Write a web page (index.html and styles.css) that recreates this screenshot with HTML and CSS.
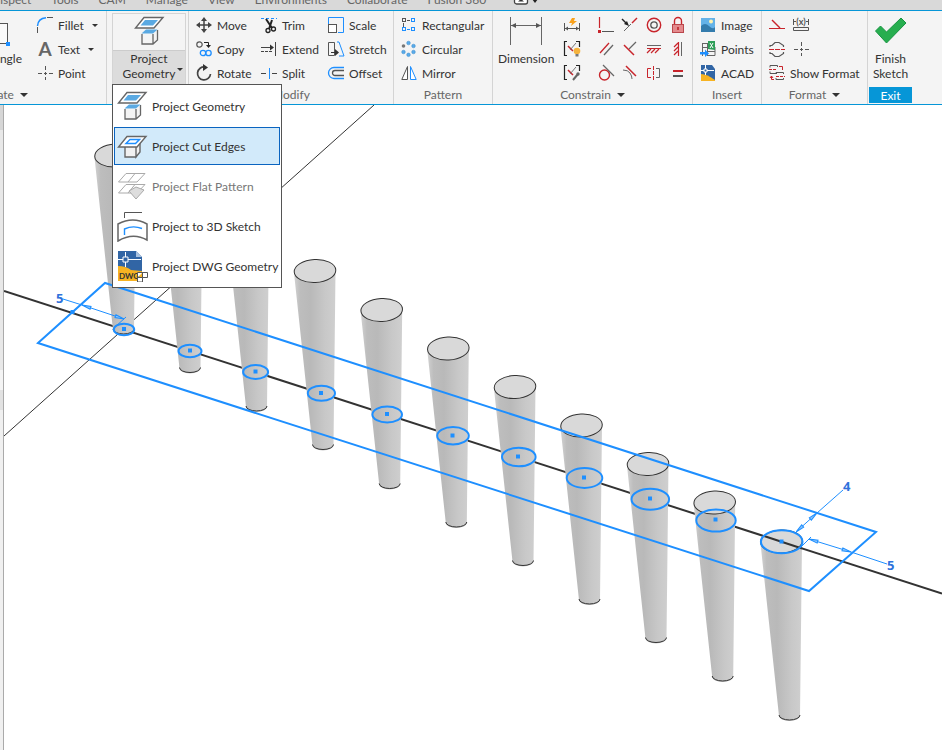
FILE: index.html
```html
<!DOCTYPE html>
<html lang="en">
<head>
  <meta charset="UTF-8" />
  <meta name="viewport" content="width=device-width, initial-scale=1.0">
  <title>Sketch - Project Cut Edges</title>
  <link rel="stylesheet" href="styles.css">
</head>
<body>
  <!-- Shared icons -->
  <svg class="defs" aria-hidden="true">
    <symbol id="i-project" viewBox="0 0 32 32">
      <path d="M11 2.500H30L21 13H2.500Z" fill="#fff" stroke="#666" stroke-width="1.400"/>
      <path d="M12 5H25L20 10.500H7.500Z" fill="#5aa9e2"/>
      <path d="M9 18.500V29H20L24.500 25V15L20 18.500Z" fill="#f4f4f4"/>
      <path d="M9 19V29H20L24.500 25V15M20 19V29" fill="none" stroke="#666" stroke-width="1.300"/>
      <path d="M8.500 18.500L13 14.500H24.500L20 18.500Z" fill="#5aa9e2"/>
    </symbol>
    <symbol id="i-point" viewBox="0 0 16 16">
      <path d="M1 8.500H5M7 8.500H10M12 8.500H16M8.500 1V5M8.500 7V10M8.500 12V15" stroke="#555" fill="none"/>
    </symbol>
  </svg>

  <!-- Tabs -->
  <nav class="tabs">
    <a href="#">Inspect</a>
    <a href="#">Tools</a>
    <a href="#">CAM</a>
    <a href="#">Manage</a>
    <a href="#">View</a>
    <a href="#">Environments</a>
    <a href="#">Collaborate</a>
    <a href="#">Fusion 360</a>
    <button class="tab-toggle" aria-label="Minimize ribbon">
      <svg width="26" height="10" viewBox="0 0 26 10"><rect x="1.500" y="-6" width="13" height="10" rx="2" fill="#fff" stroke="#444" stroke-width="1.300"/><path d="M5 1.500L8 -1L11 1.500Z" fill="#333"/><path d="M19 -1H25L22 3Z" fill="#222"/></svg>
    </button>
  </nav>

  <!-- Ribbon -->
  <header class="ribbon">
    <section class="panel create">
      <div class="panel-body">
        <button class="big rectangle">
          <svg width="32" height="32" viewBox="0 0 32 32"><rect x="1.500" y="8.500" width="27" height="20" fill="#fafafa" stroke="#555"/><rect x="27" y="27" width="4" height="4" fill="#1e8fff"/></svg>
          <span>Rectangle</span>
        </button>
        <div class="rows">
          <button class="tool"><svg class="icon" viewBox="0 0 16 16"><path d="M.500 9Q1 1.500 9 .800" fill="none" stroke="#1e8fff" stroke-width="1.500"/><path d="M10 .500H16M.500 10V16" stroke="#555"/></svg>Fillet<i class="caret small"></i></button>
          <button class="tool"><svg class="icon" viewBox="0 0 16 16"><text x="8" y="15" class="glyph">A</text></svg>Text<i class="caret small"></i></button>
          <button class="tool"><svg class="icon"><use href="#i-point"/></svg>Point</button>
        </div>
      </div>
      <button class="panel-title">Create<i class="caret"></i></button>
    </section>

    <section class="project">
      <button class="project-button" aria-expanded="true">
        <span class="project-icon"><svg width="32" height="32"><use href="#i-project"/></svg></span>
        <span class="project-label">Project<br>Geometry<i class="caret small"></i></span>
      </button>
      <div class="menu" role="menu">
        <button class="menu-item" role="menuitem"><svg width="32" height="32"><use href="#i-project"/></svg>Project Geometry</button>
        <button class="menu-item selected" role="menuitem">
          <svg width="32" height="32" viewBox="0 0 32 32"><path d="M9 16H20V27H9ZM20 16L24 13V22L20 27Z" fill="#f1f1f1" stroke="#666" stroke-width="1.400"/><path d="M11 6.500H30L21 17H2.500Z" fill="#fff" stroke="#666" stroke-width="1.400"/><path d="M14 9.500H23.500L19.500 13.500H10Z" fill="#fff" stroke="#1e8fff" stroke-width="1.500"/></svg>
          Project Cut Edges
        </button>
        <button class="menu-item" role="menuitem" disabled>
          <svg width="32" height="32" viewBox="0 0 32 32"><path d="M10 3.500H29L21 12H2.500ZM19 3.500L12 12M10 14.500H29L21 23H2.500ZM19 14.500L12 23" fill="none" stroke="#aaa"/><path d="M13 21L20 17L28 20L20 29Z" fill="#ddd" stroke="#aaa"/></svg>
          Project Flat Pattern
        </button>
        <button class="menu-item" role="menuitem">
          <svg width="32" height="32" viewBox="0 0 32 32"><path d="M8.500 8V2.500H26" fill="none" stroke="#555"/><path d="M2 14Q17 6 31 14V30Q17 22 2 31Z" fill="#fff" stroke="#666" stroke-width="1.500"/><path d="M8.500 25V19Q17 15 26 18.500" fill="none" stroke="#1e8fff" stroke-width="1.400"/></svg>
          Project to 3D Sketch
        </button>
        <button class="menu-item" role="menuitem">
          <svg width="32" height="32" viewBox="0 0 32 32"><path d="M2 1H20L26 7V22H2Z" fill="#3165a5"/><path d="M20 1V7H26Z" fill="#a9c2df"/><path d="M2 16Q10 16 15 20L26 21V31H2Z" fill="#f7b322"/><path d="M2 9.500H7M12 9.500H25M9.500 2V7M9.500 12V17M7 7H12V12H7Z" stroke="#fff" fill="none"/><text x="3" y="29" class="dwg">DWG</text><path d="M21.500 22.500H31.500V27.500H26.500V32H21.500ZM21.500 27.500H26.500V22.500" fill="#fff" stroke="#555"/></svg>
          Project DWG Geometry
        </button>
      </div>
    </section>

    <section class="panel modify">
      <div class="panel-body">
        <button class="tool"><svg class="icon" viewBox="0 0 16 16"><path d="M8 2V14M2 8H14" stroke="#444" stroke-width="1.500"/><path d="M8 0L11 4H5ZM8 16L5 12H11ZM0 8L4 5V11ZM16 8L12 11V5Z" fill="#444"/></svg>Move</button>
        <button class="tool"><svg class="icon" viewBox="0 0 16 16"><path d="M0 1.500H16" stroke="#1e8fff" stroke-dasharray="3 2"/><path d="M5 2L11 11M11 3L8 12" stroke="#222" stroke-width="2"/><circle cx="7" cy="13.500" r="2" fill="none" stroke="#222" stroke-width="1.300"/><circle cx="12.500" cy="12" r="2" fill="none" stroke="#222" stroke-width="1.300"/></svg>Trim</button>
        <button class="tool"><svg class="icon" viewBox="0 0 16 16"><path d="M.500 8V.500H15.500V15.500H10" fill="none" stroke="#1e8fff"/><rect x=".500" y="7.500" width="8" height="8" fill="#fff" stroke="#555"/></svg>Scale</button>
        <button class="tool"><svg class="icon" viewBox="0 0 16 16"><circle cx="3.500" cy="3.500" r="2.700" fill="none" stroke="#555" stroke-width="1.200"/><path d="M8 1.500H12.500V5" fill="none" stroke="#222"/><path d="M10 4H15L12.500 7Z" fill="#222"/><g fill="none" stroke="#1e8fff" stroke-width="1.300"><circle cx="7" cy="12" r="2.700"/><circle cx="12.500" cy="12" r="2.700"/></g></svg>Copy</button>
        <button class="tool"><svg class="icon" viewBox="0 0 16 16"><path d="M0 6.500H10M14.500 1V15" stroke="#444"/><path d="M0 10.500H12" stroke="#444" stroke-dasharray="3 1"/><path d="M9 3.500L13 6.500L9 9.500Z" fill="#333"/></svg>Extend</button>
        <button class="tool"><svg class="icon" viewBox="0 0 16 16"><path d="M.500 1.500H6.500V14.500H.500Z" fill="none" stroke="#555"/><path d="M9 1H11L16 15H11" fill="none" stroke="#1e8fff"/><path d="M3 11.500H8" stroke="#333"/><path d="M7 8L11 11.500L7 15Z" fill="#333"/></svg>Stretch</button>
        <button class="tool"><svg class="icon" viewBox="0 0 16 16"><path d="M9 2A6.500 6.500 0 1 0 14.500 9" fill="none" stroke="#444" stroke-width="1.700"/><path d="M7 -1L12 2.500L7 6Z" fill="#333"/></svg>Rotate</button>
        <button class="tool"><svg class="icon" viewBox="0 0 16 16"><path d="M0 8.500H5M11 8.500H16" stroke="#444"/><path d="M8.500 3V14" stroke="#1e8fff"/></svg>Split</button>
        <button class="tool"><svg class="icon" viewBox="0 0 16 16"><path d="M16 2.500H6A5.500 5.500 0 0 0 6 13.500H16" fill="none" stroke="#1e8fff" stroke-width="1.300"/><path d="M16 5.500H7A2.500 2.500 0 0 0 7 10.500H16" fill="none" stroke="#555" stroke-width="1.300"/></svg>Offset</button>
      </div>
      <div class="panel-title">Modify</div>
    </section>

    <section class="panel pattern">
      <div class="panel-body">
        <button class="tool"><svg class="icon" viewBox="0 0 16 16"><g fill="none" stroke="#555"><rect x="1.500" y="1.500" width="3" height="3"/><path d="M6 3.500H9M2.500 6V10"/></g><g fill="none" stroke="#1e8fff"><rect x="10.500" y="1.500" width="3" height="3"/><rect x="1.500" y="10.500" width="3" height="3"/><rect x="10.500" y="10.500" width="3" height="3"/><path d="M6 12.500H9"/></g></svg>Rectangular</button>
        <button class="tool"><svg class="icon" viewBox="0 0 16 16"><g fill="#5aabea" stroke="#3286c8" stroke-width=".500"><circle cx="7.500" cy="2" r="1.800"/><circle cx="12.500" cy="5" r="1.800"/><circle cx="12.500" cy="11" r="1.800"/><circle cx="7.500" cy="13.800" r="1.800"/><circle cx="2.500" cy="11" r="1.800"/></g><circle cx="2.500" cy="5" r="1.800" fill="#777"/></svg>Circular</button>
        <button class="tool"><svg class="icon" viewBox="0 0 16 16"><path d="M6.500 1.500V14.500H.800Z" fill="#fff" stroke="#555"/><path d="M9.500 1.500V14.500H15.200Z" fill="#fff" stroke="#1e8fff"/></svg>Mirror</button>
      </div>
      <div class="panel-title">Pattern</div>
    </section>

    <section class="panel constrain">
      <div class="panel-body">
        <button class="big dimension-button">
          <svg width="34" height="32" viewBox="0 0 34 32"><path d="M1.500 2V30M32.500 2V30" stroke="#666"/><path d="M2 10.500H32" stroke="#666"/><path d="M2 10.500L7 8V13ZM32 10.500L27 8V13Z" fill="#555"/></svg>
          <span>Dimension</span>
        </button>
        <div class="constraints">
          <button aria-label="Automatic dimensions"><svg class="icon" viewBox="0 0 16 16"><path d="M.500 6V14M15.500 6V14M1 11.500H15" stroke="#555"/><path d="M1 11.500L4 9.500V13.500ZM15 11.500L12 9.500V13.500Z" fill="#555"/><path d="M8 1L5 6H8L7 9L13 4H10L11 1Z" fill="#f9a11b"/></svg></button>
          <button aria-label="Coincident"><svg class="icon" viewBox="0 0 16 16"><path d="M1.500 0V11" stroke="#c8242b" stroke-width="1.200"/><path d="M4 14.500H16" stroke="#555"/><rect y="13" width="3" height="3" fill="#c8242b"/></svg></button>
          <button aria-label="Collinear"><svg class="icon" viewBox="0 0 16 16"><path d="M2 14L9 7" stroke="#666"/><path d="M10 6L15 1" stroke="#c8242b" stroke-width="1.500"/><path d="M0 2L4 6" stroke="#222" stroke-width="1.500"/><path d="M7 9L2 7L5 4Z" fill="#222"/></svg></button>
          <button aria-label="Concentric"><svg class="icon" viewBox="0 0 16 16"><circle cx="8" cy="8" r="6.700" fill="none" stroke="#c8242b" stroke-width="1.400"/><circle cx="8" cy="8" r="3.200" fill="none" stroke="#555" stroke-width="1.300"/></svg></button>
          <button aria-label="Fix"><svg class="icon" viewBox="0 0 16 16"><path d="M4.500 7V4A3.500 3.500 0 0 1 11.500 4V7" fill="none" stroke="#c8242b" stroke-width="1.400"/><rect x="2.500" y="7.500" width="11" height="8" fill="#e48a8d" stroke="#b9474c"/><path d="M8 10V13" stroke="#b91f26" stroke-width="1.500"/></svg></button>

          <button aria-label="Show constraints"><svg class="icon" viewBox="0 0 16 16"><path d="M3 .500H.500V14.500H3M12 .500H15.500V6" fill="none" stroke="#222" stroke-width="1.200"/><path d="M4 5L9 10" stroke="#c8242b" stroke-width="1.500"/><path d="M6 9L12 2" stroke="#777"/><circle cx="13" cy="10" r="3.300" fill="#f5b33e"/><path d="M11.500 13H14.500V15.500H11.500Z" fill="#777"/></svg></button>
          <button aria-label="Parallel"><svg class="icon" viewBox="0 0 16 16"><path d="M2 12L11 2" stroke="#c8242b" stroke-width="1.300"/><path d="M6 14L15 4" stroke="#666" stroke-width="1.300"/></svg></button>
          <button aria-label="Perpendicular"><svg class="icon" viewBox="0 0 16 16"><path d="M7 8L14 1" stroke="#666" stroke-width="1.300"/><path d="M2 4L12 14" stroke="#c8242b" stroke-width="1.500"/></svg></button>
          <button aria-label="Horizontal"><svg class="icon" viewBox="0 0 16 16"><path d="M1 4.500H15" stroke="#666"/><path d="M1 7.500H15M5 8L1 12M9 8L5 12M13 8L9 12" stroke="#c8242b" stroke-width="1.200" fill="none"/></svg></button>
          <button aria-label="Vertical"><svg class="icon" viewBox="0 0 16 16"><path d="M11.500 1V15" stroke="#666"/><path d="M8.500 1V15M8 2L4 6M8 6L4 10M8 10L4 14" stroke="#c8242b" stroke-width="1.200"/></svg></button>

          <button aria-label="Constraint settings"><svg class="icon" viewBox="0 0 16 16"><path d="M3 .500H.500V14.500H3M12 .500H15.500V6" fill="none" stroke="#222" stroke-width="1.200"/><path d="M4 5L9 10" stroke="#c8242b" stroke-width="1.500"/><path d="M6 9L12 2" stroke="#777"/><path d="M9 15L14 9" stroke="#666" stroke-width="2"/><circle cx="14" cy="9" r="1.700" fill="#666"/></svg></button>
          <button aria-label="Tangent"><svg class="icon" viewBox="0 0 16 16"><circle cx="6.500" cy="10" r="5" fill="none" stroke="#c8242b" stroke-width="1.400"/><path d="M5 0L16 11" stroke="#666" stroke-width="1.300"/></svg></button>
          <button aria-label="Smooth"><svg class="icon" viewBox="0 0 16 16"><path d="M1 5Q6 5 8 8T10 14" fill="none" stroke="#666"/><path d="M4 1L14 11" stroke="#c8242b" stroke-width="1.500"/></svg></button>
          <button aria-label="Symmetric"><svg class="icon" viewBox="0 0 16 16"><path d="M5 3.500H1.500V12.500H5" fill="none" stroke="#c8242b"/><path d="M7.500 1V15" stroke="#c8242b" stroke-dasharray="4 1"/><path d="M10 3.500H13.500V12.500H10" fill="none" stroke="#666"/></svg></button>
          <button aria-label="Equal"><svg class="icon" viewBox="0 0 16 16"><path d="M3 6H13" stroke="#c8242b" stroke-width="2"/><path d="M3 11H13" stroke="#555" stroke-width="2"/></svg></button>
        </div>
      </div>
      <button class="panel-title">Constrain<i class="caret"></i></button>
    </section>

    <section class="panel insert">
      <div class="panel-body">
        <button class="tool"><svg class="icon" viewBox="0 0 16 16"><rect x="1" y="1" width="14" height="14" fill="#64b2e8"/><path d="M1 9Q5 5 9 9T15 10V15H1Z" fill="#347cad"/><circle cx="11" cy="4.500" r="2" fill="#fff2b0"/></svg>Image</button>
        <button class="tool"><svg class="icon" viewBox="0 0 16 16"><path d="M2.500 2V15M2 2.500H8M2 6.500H15M7.500 2V15M8 10.500H15M8 14.500H15V6" stroke="#666" fill="none"/><path d="M8 0H15V9L8 8Z" fill="#2e9e58"/><path d="M10 2L13 7M13 2L10 7" stroke="#fff"/><path d="M0 11H5V8.500L9 12.500L5 16V13.500H0Z" fill="#1e8fff"/></svg>Points</button>
        <button class="tool"><svg class="icon" viewBox="0 0 16 16"><path d="M1 0H12L15 4V15H1Z" fill="#3165a5"/><path d="M1 9Q7 9 15 15V16H1Z" fill="#f7b322"/><path d="M5.500 0V4M5.500 7V10M0 5.500H4M7 5.500H14M4 4H7V7H4Z" stroke="#fff" fill="none"/></svg>ACAD</button>
      </div>
      <div class="panel-title">Insert</div>
    </section>

    <section class="panel format">
      <div class="panel-body">
        <div class="pair">
          <button aria-label="Construction"><svg class="icon" viewBox="0 0 16 16"><path d="M0 11.500H16" stroke="#c8242b"/><path d="M3 3L11 11" stroke="#c8242b" stroke-width="1.400"/></svg></button>
          <button aria-label="Driven dimension"><svg class="icon" viewBox="0 0 16 16"><path d="M.500 2V8M15.500 2V8M1 4.500H3M13 4.500H15M.500 10.500H15.500V13.500H.500Z" fill="none" stroke="#555"/><text x="8" y="8" class="driven">(x)</text></svg></button>
        </div>
        <div class="pair">
          <button aria-label="Centerline"><svg class="icon" viewBox="0 0 16 16"><path d="M1 6V4.500H3L6 1.500H10L14.500 4.500V6M1 11V12.500H3L6 15.500H10L14.500 12.500V11" fill="none" stroke="#555" stroke-width="1.200"/><path d="M0 8.500H16" stroke="#c8242b" stroke-dasharray="5 1"/></svg></button>
          <button aria-label="Center point"><svg class="icon"><use href="#i-point"/></svg></button>
        </div>
        <button class="tool"><svg class="icon" viewBox="0 0 16 16"><g fill="none" stroke="#555"><path d="M1 2.500V.500H8.500V2M1 6.500V8.500H8M7 9V7.500H14.500V9M7 13V14.500H14.500V13"/></g><g fill="none" stroke="#c8242b"><path d="M0 4.500H8" stroke-dasharray="3 1"/><path d="M7 11.500H16" stroke-dasharray="3 1"/><path d="M10 1.500H13.500V5M5 14.500H2.500V11M1 13L2.500 11L4 13"/></g></svg>Show Format</button>
      </div>
      <button class="panel-title">Format<i class="caret"></i></button>
    </section>

    <section class="panel exit">
      <div class="panel-body">
        <button class="big">
          <svg width="34" height="32" viewBox="0 0 34 32"><path d="M1.500 16L6.500 11L12.500 17L27 3L32 8L12.500 28Z" fill="#27ae4f" stroke="#189441"/></svg>
          <span>Finish<br>Sketch</span>
        </button>
      </div>
      <div class="panel-title">Exit</div>
    </section>
  </header>

  <!-- Model view -->
  <main class="workspace">
    <aside class="browser-edge"><span></span><span></span><span></span><span></span><span></span></aside>
    <svg class="scene" viewBox="4 105 938 645" preserveAspectRatio="xMinYMin slice" role="img" aria-label="Model with eleven tapered pins cut by a sketch plane">
      <defs>
        <linearGradient id="pinShade">
          <stop offset="0" stop-color="#d2d2d2"/>
          <stop offset=".150" stop-color="#bdbdbd"/>
          <stop offset=".400" stop-color="#b9b9b9"/>
          <stop offset=".750" stop-color="#c8c8c8"/>
          <stop offset="1" stop-color="#cfcfcf"/>
        </linearGradient>
        <g id="pin">
          <path d="M-21 2L-2.500 174.500A10.500 5 0 0 0 18.500 174.500L20.500 0Z" fill="url(#pinShade)"/>
          <path d="M-2.500 173.500A10.500 5 0 0 0 18.500 173.500" fill="none" stroke="#333"/>
          <ellipse rx="20.800" ry="11.500" transform="rotate(-3)" fill="#d9d9d9" stroke="#333"/>
        </g>
        <marker id="arrow" viewBox="0 0 10 6" refX="10" refY="3" markerWidth="10" markerHeight="6" markerUnits="userSpaceOnUse" orient="auto-start-reverse">
          <path d="M10 3L1 1.500V4.500Z" class="arrow"/>
        </marker>
      </defs>

      <path class="thin" d="M4 436L374 105"/>
      <path class="axis" d="M4 291L942 593.500"/>

      <use href="#pin" x="115.500" y="155.500"/>
      <use href="#pin" x="182" y="194"/>
      <use href="#pin" x="248.500" y="232.500"/>
      <use href="#pin" x="315" y="271"/>
      <use href="#pin" x="381.700" y="310"/>
      <use href="#pin" x="448.300" y="348.500"/>
      <use href="#pin" x="515" y="387"/>
      <use href="#pin" x="581.500" y="425.500"/>
      <use href="#pin" x="648" y="464"/>
      <use href="#pin" x="714.700" y="502.500"/>
      <use href="#pin" x="781.500" y="541.500"/>
      <path class="axis" d="M764 536L802 548.500"/>

      <!-- Cut edges -->
      <g class="sketch">
        <path d="M38 343L105 283L876 532L809 591Z"/>
        <ellipse cx="124" cy="329.500" rx="10.200" ry="5.700"/>
        <ellipse cx="190" cy="351" rx="11.500" ry="6.300"/>
        <ellipse cx="255.600" cy="372" rx="12.500" ry="6.900"/>
        <ellipse cx="321.400" cy="393.300" rx="13.600" ry="7.500"/>
        <ellipse cx="387.200" cy="414.500" rx="14.800" ry="8.100"/>
        <ellipse cx="453" cy="435.700" rx="15.800" ry="8.700"/>
        <ellipse cx="518.800" cy="457" rx="16.800" ry="9.300"/>
        <ellipse cx="584.500" cy="478" rx="17.800" ry="9.900"/>
        <ellipse cx="650.300" cy="499.300" rx="18.800" ry="10.500"/>
        <ellipse cx="716" cy="520.500" rx="19.700" ry="11"/>
        <ellipse cx="781.700" cy="541.700" rx="20.800" ry="11.500"/>
      </g>
      <path class="centers" d="M122 329h4M188 350.500h4M253.500 371.500h4M319 393h4M385 414h4M450.500 435.500h4M516 456.500h4M582 477.500h4M648 498.500h4M713.500 519.500h4M779.500 541.500h4M70.500 312h4"/>

      <!-- Dimensions -->
      <g class="dimension">
        <path d="M63 299L82 305M115 327L126 317"/>
        <path d="M82 305L124 319" marker-start="url(#arrow)" marker-end="url(#arrow)"/>
        <path d="M843 490L817 513"/>
        <path d="M817 513L796 532" marker-start="url(#arrow)" marker-end="url(#arrow)"/>
        <path d="M801 547L811 537M851 552L887 564"/>
        <path d="M809 539L851 552" marker-start="url(#arrow)" marker-end="url(#arrow)"/>
        <text x="56" y="303">5</text>
        <text x="843" y="491">4</text>
        <text x="887" y="570">5</text>
      </g>
    </svg>
  </main>
</body>
</html>
```

FILE: styles.css
```css
* {
  box-sizing: border-box;
}
body {
  margin: 0;
  min-height: 100vh;
  display: flex;
  flex-direction: column;
  overflow: hidden;
  background: #fff;
  color: #333;
  font-family: Lato, "Open Sans", sans-serif;
  font-size: 12px;
  line-height: 15px;
}
button {
  margin: 0;
  padding: 0;
  border: 0;
  background: none;
  color: inherit;
  font: inherit;
}
svg {
  display: block;
  flex: none;
}
.defs {
  display: none;
}

/* Tabs */
.tabs {
  display: flex;
  align-items: flex-end;
  gap: 20px;
  height: 10px;
  margin-left: -7px;
  padding-bottom: 3px;
  background: #d9d9d9;
  overflow: hidden;
}
.tabs a {
  color: #666;
  text-decoration: none;
  white-space: nowrap;
}
.tab-toggle {
  margin: 0 0 -3px 7px;
}

/* Ribbon */
.ribbon {
  display: flex;
  height: 95px;
  border-top: 1px solid #0696d7;
  border-bottom: 1px solid #0696d7;
  background: #f4f4f4;
}
.panel {
  display: flex;
  flex-direction: column;
  flex: none;
  border-right: 1px solid #d4d4d4;
}
.panel-body {
  display: grid;
  grid-auto-rows: 24px;
  height: 74px;
  padding: 2px 7px 0;
}
.panel-title {
  display: flex;
  align-items: center;
  justify-content: center;
  gap: 6px;
  height: 19px;
  color: #666;
}
.tool {
  display: flex;
  align-items: center;
  gap: 5px;
  height: 24px;
  white-space: nowrap;
}
.icon {
  width: 16px;
  height: 16px;
  overflow: visible;
}
.glyph {
  font-size: 19px;
  font-weight: bold;
  fill: #666;
  text-anchor: middle;
}
.dwg {
  font-size: 8px;
  font-weight: bold;
  fill: #333;
}
.driven {
  font-size: 9px;
  font-weight: bold;
  fill: #555;
  text-anchor: middle;
}
.big {
  display: flex;
  flex-direction: column;
  align-items: center;
  gap: 4px;
  padding-top: 2px;
  height: 72px;
}
.caret {
  border: 4px solid transparent;
  border-top-color: #333;
  border-bottom: 0;
}
.caret.small {
  margin-left: 3px;
  border-width: 3px 3px 0;
}

.create {
  margin-left: -40px;
  border-right: 0;
}
.create .panel-body {
  display: flex;
  justify-content: flex-end;
  gap: 15px;
  width: 146px;
}
.rows {
  width: 62px;
}
.create .panel-title {
  align-self: flex-start;
  margin-left: 19px;
}
.rectangle {
  align-items: flex-end;
}
.rectangle svg {
  margin-right: 11px;
}

/* Project button and its menu */
.project {
  position: relative;
  flex: none;
  padding: 2px 2px 0 5px;
  border-left: 1px solid #d4d4d4;
  border-right: 1px solid #d4d4d4;
}
.project-button {
  display: block;
  width: 74px;
  border: 1px solid #d4d4d4;
}
.project-icon {
  display: flex;
  justify-content: center;
  height: 36px;
  padding-top: 1px;
}
.project-label {
  display: block;
  position: relative;
  height: 35px;
  border-top: 1px solid #ccc;
  background: #dcdcdc;
}
.project-label .caret {
  position: absolute;
  right: 2px;
  bottom: 14px;
}
.menu {
  position: absolute;
  z-index: 1;
  top: 73px;
  left: 5px;
  display: flex;
  flex-direction: column;
  gap: 2px;
  min-width: 170px;
  padding: 2px 1px;
  border: 1px solid #555;
  background: #fff;
}
.menu-item {
  display: flex;
  align-items: center;
  gap: 4px;
  height: 38px;
  padding: 0 1px;
  border: 1px solid transparent;
  white-space: nowrap;
}
.menu-item.selected {
  border-color: #0a64c0;
  background: #d2eafa;
}
.menu-item:disabled {
  color: #777;
}

.modify .panel-body {
  grid-template-columns: 65px 67px 65px;
  padding-right: 0;
}
.pattern .panel-body {
  width: 98px;
}
.constrain .panel-body {
  display: flex;
  gap: 10px;
  width: 199px;
  padding-left: 5px;
}
.dimension-button {
  width: 57px;
}
.constraints {
  display: grid;
  grid-template-columns: 34px repeat(4, 24px);
  grid-auto-rows: 24px;
}
.constraints button,
.pair button {
  display: flex;
  align-items: center;
}
.insert .panel-body {
  width: 68px;
}
.pair {
  display: flex;
  gap: 8px;
}
.format .panel-body {
  width: 105px;
}
.exit .panel-body {
  padding: 2px 4px 0;
}
.exit .big {
  width: 37px;
}
.exit .panel-title {
  height: 16px;
  margin: 2px 1px 0;
  background: #0696d7;
  color: #fff;
}
.exit {
  border-right: 0;
}

/* Model view */
.workspace {
  display: flex;
  flex: 1;
  min-height: 0;
}
.browser-edge {
  display: flex;
  flex-direction: column;
  flex: none;
  width: 4px;
  border-right: 1px solid #aaa;
  background: #f0f0f0;
}
.browser-edge span {
  height: 20px;
  background: #e2e2e2;
}
.browser-edge span:first-child {
  height: 25px;
  background: #d6d6d6;
}
.browser-edge span:nth-child(2) {
  height: 240px;
  background: #e8e8e8;
}
.browser-edge span:nth-child(3) {
  background: #f4f4f4;
}
.browser-edge span:last-child {
  flex: 1;
  background: #f0f0f0;
}
.scene {
  flex: 1;
  min-width: 0;
  height: calc(100vh - 105px);
}
.thin {
  stroke: #333;
}
.axis {
  stroke: #333;
  stroke-width: 2;
}
.sketch {
  fill: none;
  stroke: #1e8fff;
  stroke-width: 2;
}
.centers {
  stroke: #1e8fff;
  stroke-width: 4;
}
.dimension {
  stroke: #1e8fff;
}
.dimension text {
  stroke: none;
  fill: #2f72dc;
  font-family: "Open Sans", sans-serif;
  font-size: 13px;
  font-weight: bold;
}
.arrow {
  fill: #8cc4fb;
  stroke: #1e8fff;
}
```
